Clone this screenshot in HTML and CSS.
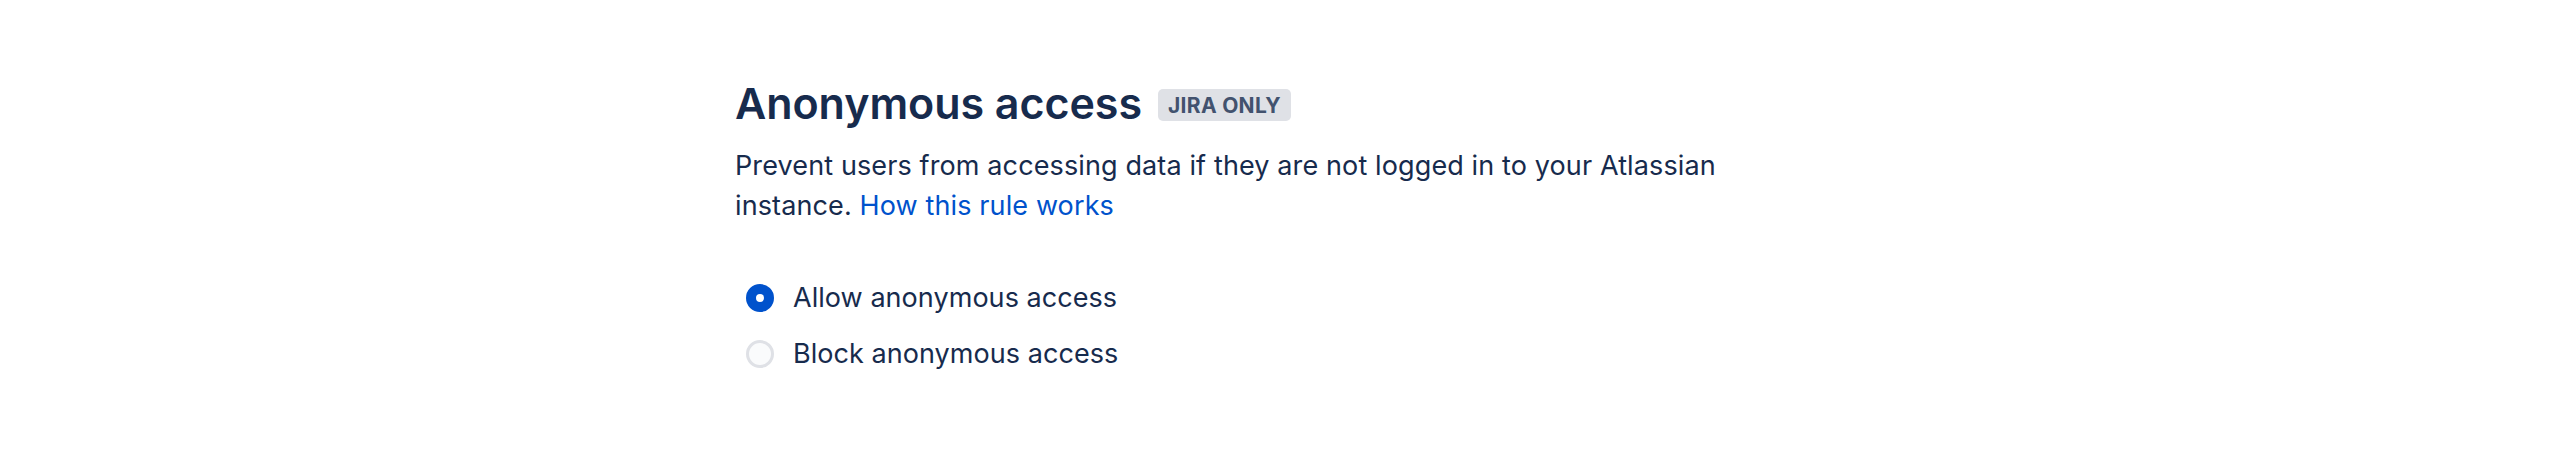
FILE: index.html
```html
<!DOCTYPE html>
<html lang="en">
<head>
<meta charset="utf-8">
<title>Anonymous access</title>
<link rel="stylesheet" href="styles.css">
</head>
<body>
<main class="page">
  <section class="rule">
    <header class="rule-header">
      <h1 class="rule-title">Anonymous access</h1>
      <span class="lozenge">JIRA ONLY</span>
    </header>
    <p class="rule-desc">Prevent users from accessing data if they are not logged in to your Atlassian instance. <a class="link" href="#">How this rule works</a></p>
    <div class="radio-group" role="radiogroup">
      <label class="radio-row">
        <span class="radio radio-checked"></span>
        <span class="radio-label">Allow anonymous access</span>
      </label>
      <label class="radio-row">
        <span class="radio"></span>
        <span class="radio-label">Block anonymous access</span>
      </label>
    </div>
  </section>
</main>
</body>
</html>
```
FILE: styles.css
```css
html, body {
  margin: 0;
  padding: 0;
  background: #ffffff;
}
body {
  font-family: Inter, "Noto Sans", sans-serif;
  color: #172b4d;
}
.page {
  width: 1090px;
  margin: 0 auto;
  padding-top: 77px;
}
.rule-header {
  display: flex;
  align-items: center;
  gap: 16px;
}
.rule-title {
  margin: 0;
  font-size: 43px;
  line-height: 52px;
  font-weight: 600;
  letter-spacing: -0.05px;
  color: #172b4d;
}
.lozenge {
  display: inline-flex;
  align-items: center;
  height: 32px;
  padding: 0 10px;
  border-radius: 5px;
  background: #dfe1e6;
  color: #42526e;
  font-size: 21px;
  font-weight: 700;
  letter-spacing: 0.3px;
  margin-top: 4px;
}
.rule-desc {
  margin: 17px 0 0;
  max-width: 1040px;
  font-size: 27px;
  line-height: 40px;
  letter-spacing: 0.12px;
  color: #172b4d;
}
.link {
  color: #0052cc;
  text-decoration: none;
}
.radio-group {
  display: flex;
  flex-direction: column;
  gap: 17px;
  margin-top: 52px;
}
.radio-row {
  display: flex;
  align-items: center;
  gap: 19px;
  padding-left: 11px;
  height: 39px;
}
.radio {
  box-sizing: border-box;
  width: 28px;
  height: 28px;
  border-radius: 50%;
  border: 3px solid #dfe1e6;
  background: #fafbfc;
}
.radio-checked {
  border: 10px solid #0052cc;
  background: #ffffff;
}
.radio-label {
  font-size: 27px;
  line-height: 39px;
  letter-spacing: 0.05px;
  color: #172b4d;
}
```
